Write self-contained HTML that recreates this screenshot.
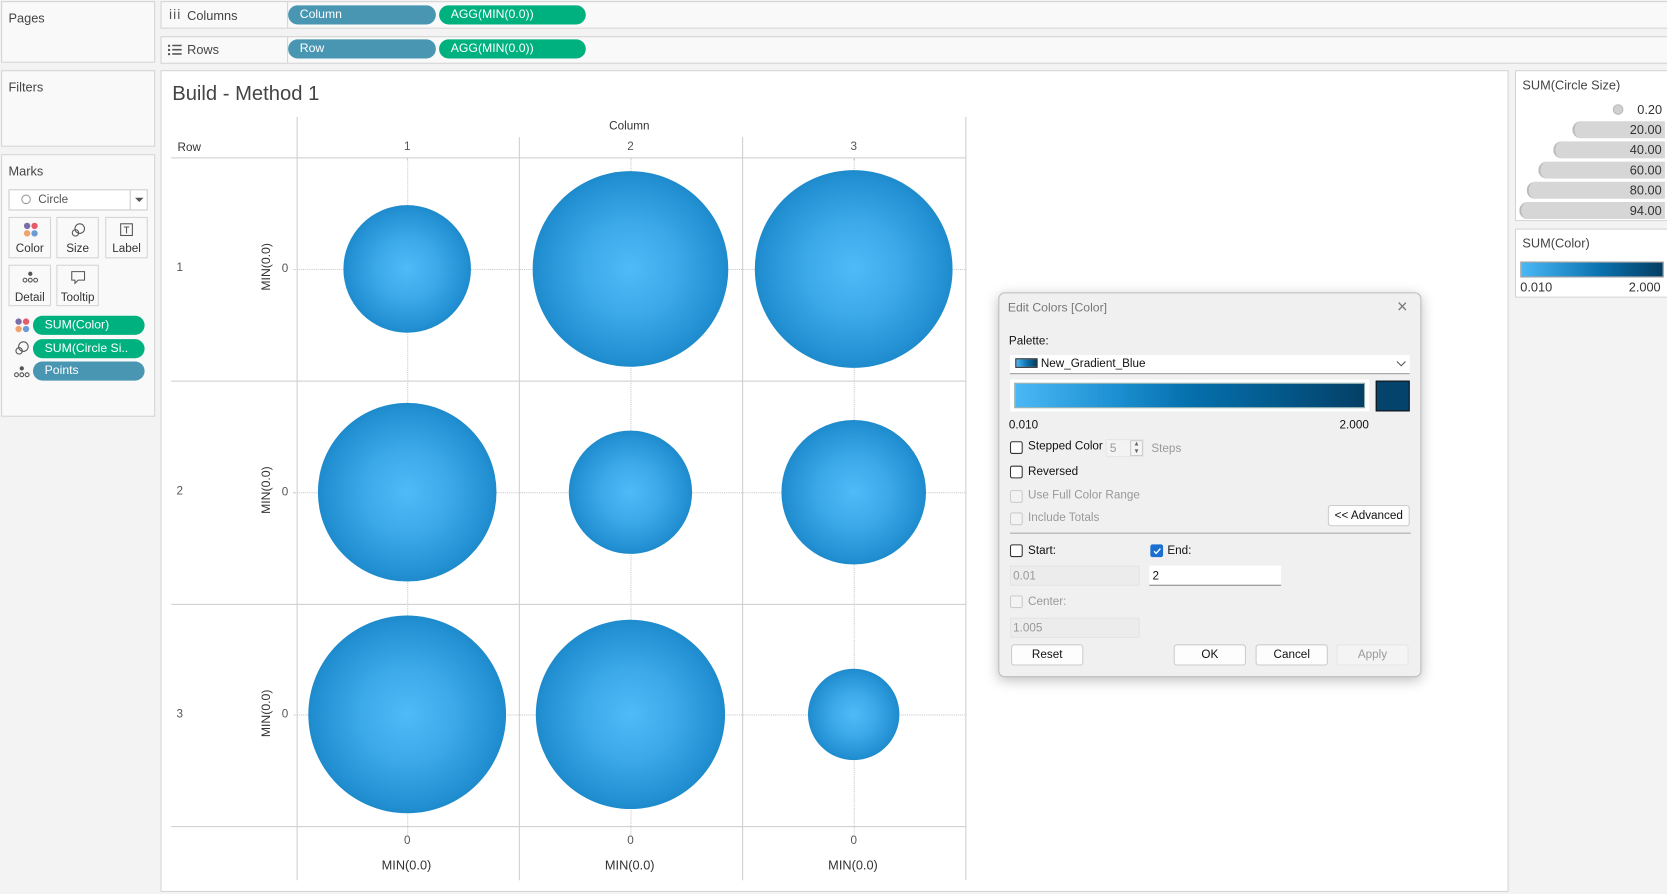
<!DOCTYPE html>
<html><head><meta charset="utf-8"><style>
*{box-sizing:border-box;margin:0;padding:0}
html,body{width:1667px;height:894px;overflow:hidden;background:#f3f3f3;font-family:"Liberation Sans",sans-serif}
#w{position:absolute;left:0;top:0;width:1568px;height:841px;transform:scale(1.06314);transform-origin:0 0;font-size:11px;color:#333}
.a{position:absolute}
.pan{position:absolute;background:#f9f9f9;border:1px solid #d4d4d4}
.pt{position:absolute;left:6px;top:8px;font-size:12px;color:#444}
.pill{position:absolute;height:18px;border-radius:9px;color:#fff;font-size:11.5px;padding-left:11px;display:flex;align-items:center;white-space:nowrap}
.bl{background:#4996b2}.gr{background:#00b180}
.btn{position:absolute;background:#f9f9f9;border:1px solid #d4d4d4;text-align:center;font-size:11px;color:#333}
.c{position:absolute;border-radius:50%;background:radial-gradient(circle at 50% 50%,#4fbbf8 0%,#3ba8e8 35%,#2290d2 65%,#1179bb 88%,#0a68a6 100%)}
.vl{position:absolute;width:1px;background:#cfcfcf}
.hl{position:absolute;height:1px;background:#cfcfcf}
.dv{position:absolute;width:0;border-left:1px dotted #c8c8c8}
.dh{position:absolute;height:0;border-top:1px dotted #c8c8c8}
.t{position:absolute;font-size:11px;color:#555;white-space:nowrap}
.rot{position:absolute;transform:rotate(-90deg);transform-origin:center;font-size:11.5px;color:#333;white-space:nowrap;width:60px;text-align:center}
.cb{position:absolute;width:12px;height:12px;border:1px solid #333;border-radius:2px;background:#fff}
.cbd{border-color:#ccc;background:#f3f3f3}
.dl{position:absolute;font-size:11px;color:#111;white-space:nowrap}
.dd{color:#999}
.db{position:absolute;background:#fdfdfd;border:1px solid #ccc;border-radius:3px;text-align:center;font-size:11px;line-height:18px;color:#111}
.lb{position:absolute;height:16px;background:#d6d6d6;border-left:2px solid #bbb;border-radius:8px 0 0 8px;text-align:right;padding-right:3px;font-size:12px;line-height:16px;color:#333}
</style></head><body><div id="w">
<div class="pan" style="left:1px;top:1px;width:145px;height:58px"><div class="pt">Pages</div></div>
<div class="pan" style="left:1px;top:66px;width:145px;height:72px"><div class="pt">Filters</div></div>
<div class="pan" style="left:1px;top:145px;width:145px;height:247px"><div class="pt">Marks</div>
 <div class="a" style="left:6px;top:32px;width:131px;height:20px;border:1px solid #ccc;background:#fff">
  <div class="a" style="left:11px;top:4px;width:9px;height:9px;border:1px solid #999;border-radius:50%"></div>
  <div class="a" style="left:27px;top:3px;font-size:11px;color:#555">Circle</div>
  <div class="a" style="left:113px;top:0;width:1px;height:18px;background:#ccc"></div>
  <div class="a" style="left:118px;top:7px;border:4px solid transparent;border-top:4px solid #555"></div>
 </div>
 <div class="btn" style="left:6px;top:58px;width:40px;height:39px"><svg class="a" style="left:13px;top:4px" width="14" height="14"><circle cx="3.5" cy="3.5" r="3" fill="#7b6ea8"/><circle cx="10.5" cy="3.5" r="3" fill="#e85a6a"/><circle cx="3.5" cy="10.5" r="3" fill="#f0a46c"/><circle cx="10.5" cy="10.5" r="3" fill="#6d9bd4"/></svg><div class="a" style="left:0;width:38px;top:23px">Color</div></div>
 <div class="btn" style="left:51px;top:58px;width:40px;height:39px"><svg class="a" style="left:12px;top:4px" width="15" height="15" fill="none" stroke="#555"><circle cx="9" cy="6" r="4.5"/><circle cx="5" cy="10" r="3"/></svg><div class="a" style="left:0;width:38px;top:23px">Size</div></div>
 <div class="btn" style="left:97px;top:58px;width:40px;height:39px"><svg class="a" style="left:12px;top:4px" width="14" height="14" fill="none" stroke="#555"><rect x="1.5" y="1.5" width="11" height="11"/><path d="M4.5 4.5h5M7 4.5v6"/></svg><div class="a" style="left:0;width:38px;top:23px">Label</div></div>
 <div class="btn" style="left:6px;top:103px;width:40px;height:39px"><svg class="a" style="left:12px;top:5px" width="15" height="12" fill="none" stroke="#555"><circle cx="7.5" cy="2.5" r="1.5" fill="#555"/><circle cx="2.5" cy="8.5" r="1.8"/><circle cx="7.5" cy="8.5" r="1.8"/><circle cx="12.5" cy="8.5" r="1.8"/></svg><div class="a" style="left:0;width:38px;top:24px">Detail</div></div>
 <div class="btn" style="left:51px;top:103px;width:40px;height:39px"><svg class="a" style="left:12px;top:4px" width="15" height="15" fill="none" stroke="#555"><path d="M1.5 1.5h12v8h-6l-3 3v-3h-3z"/></svg><div class="a" style="left:0;width:38px;top:24px">Tooltip</div></div>
 <svg class="a" style="left:12px;top:153px" width="14" height="14"><circle cx="3.5" cy="3.5" r="3" fill="#7b6ea8"/><circle cx="10.5" cy="3.5" r="3" fill="#e85a6a"/><circle cx="3.5" cy="10.5" r="3" fill="#f0a46c"/><circle cx="10.5" cy="10.5" r="3" fill="#6d9bd4"/></svg>
 <div class="pill gr" style="left:29px;top:151px;width:105px">SUM(Color)</div>
 <svg class="a" style="left:11px;top:174px" width="15" height="15" fill="none" stroke="#555"><circle cx="9" cy="6" r="4.5"/><circle cx="5" cy="10" r="3"/></svg>
 <div class="pill gr" style="left:29px;top:173px;width:105px">SUM(Circle Si..</div>
 <svg class="a" style="left:11px;top:198px" width="15" height="12" fill="none" stroke="#555"><circle cx="7.5" cy="2.5" r="1.5" fill="#555"/><circle cx="2.5" cy="8.5" r="1.8"/><circle cx="7.5" cy="8.5" r="1.8"/><circle cx="12.5" cy="8.5" r="1.8"/></svg>
 <div class="pill bl" style="left:29px;top:194px;width:105px">Points</div>
</div>
<div class="pan" style="left:151px;top:1px;width:1420px;height:26px">
 <div class="a" style="left:7px;top:4px;font-size:13px;letter-spacing:1px;color:#555">iii</div>
 <div class="a" style="left:24px;top:6px;font-size:12px;color:#444">Columns</div>
 <div class="a" style="left:118px;top:0;width:1px;height:24px;background:#d4d4d4"></div>
</div>
<div class="pill bl" style="left:271px;top:5px;width:139px">Column</div>
<div class="pill gr" style="left:413px;top:5px;width:138px">AGG(MIN(0.0))</div>
<div class="pan" style="left:151px;top:34px;width:1420px;height:26px">
 <svg class="a" style="left:6px;top:7px" width="13" height="10" fill="#555"><rect x="0" y="0" width="2" height="2"/><rect x="0" y="4" width="2" height="2"/><rect x="0" y="8" width="2" height="2"/><rect x="4" y="0" width="9" height="1.5"/><rect x="4" y="4" width="9" height="1.5"/><rect x="4" y="8" width="9" height="1.5"/></svg>
 <div class="a" style="left:24px;top:5px;font-size:12px;color:#444">Rows</div>
 <div class="a" style="left:118px;top:0;width:1px;height:24px;background:#d4d4d4"></div>
</div>
<div class="pill bl" style="left:271px;top:37px;width:139px">Row</div>
<div class="pill gr" style="left:413px;top:37px;width:138px">AGG(MIN(0.0))</div>
<div class="a" style="left:151px;top:66px;width:1268px;height:773px;background:#fff;border:1px solid #d4d4d4"></div>
<div class="a" style="left:162px;top:78px;font-size:19px;color:#444">Build - Method 1</div>
<div class="t" style="left:573px;top:113px;color:#333">Column</div>
<div class="t" style="left:167px;top:133px;color:#333">Row</div>
<div class="t" style="left:380px;top:132px">1</div><div class="t" style="left:590px;top:132px">2</div><div class="t" style="left:800px;top:132px">3</div>
<div class="vl" style="left:279px;top:110px;height:718px"></div>
<div class="vl" style="left:488px;top:129px;height:699px"></div>
<div class="vl" style="left:698px;top:129px;height:699px"></div>
<div class="vl" style="left:908px;top:110px;height:718px"></div>
<div class="hl" style="left:161px;top:148px;width:748px"></div>
<div class="hl" style="left:161px;top:358px;width:748px"></div>
<div class="hl" style="left:161px;top:568px;width:748px"></div>
<div class="hl" style="left:161px;top:777px;width:748px"></div>
<div class="dv" style="left:383px;top:149px;height:636px"></div>
<div class="dv" style="left:593px;top:149px;height:636px"></div>
<div class="dv" style="left:803px;top:149px;height:636px"></div>
<div class="dh" style="left:276px;top:253px;width:632px"></div>
<div class="dh" style="left:276px;top:463px;width:632px"></div>
<div class="dh" style="left:276px;top:672px;width:632px"></div>
<div class="t" style="left:166px;top:246px">1</div><div class="t" style="left:166px;top:456px">2</div><div class="t" style="left:166px;top:666px">3</div>
<div class="rot" style="left:221px;top:245px">MIN(0.0)</div><div class="t" style="left:265px;top:247px">0</div>
<div class="rot" style="left:221px;top:455px">MIN(0.0)</div><div class="t" style="left:265px;top:457px">0</div>
<div class="rot" style="left:221px;top:665px">MIN(0.0)</div><div class="t" style="left:265px;top:666px">0</div>
<div class="t" style="left:380px;top:785px">0</div><div class="t" style="left:590px;top:785px">0</div><div class="t" style="left:800px;top:785px">0</div>
<div class="t" style="left:359px;top:807px;font-size:12px;color:#333">MIN(0.0)</div>
<div class="t" style="left:569px;top:807px;font-size:12px;color:#333">MIN(0.0)</div>
<div class="t" style="left:779px;top:807px;font-size:12px;color:#333">MIN(0.0)</div>
<div class="c" style="left:323px;top:193px;width:120px;height:120px"></div>
<div class="c" style="left:501px;top:161px;width:184px;height:184px"></div>
<div class="c" style="left:710px;top:160px;width:186px;height:186px"></div>
<div class="c" style="left:299px;top:379px;width:168px;height:168px"></div>
<div class="c" style="left:535px;top:405px;width:116px;height:116px"></div>
<div class="c" style="left:735px;top:395px;width:136px;height:136px"></div>
<div class="c" style="left:290px;top:579px;width:186px;height:186px"></div>
<div class="c" style="left:504px;top:583px;width:178px;height:178px"></div>
<div class="c" style="left:760px;top:629px;width:86px;height:86px"></div>
<div class="pan" style="left:1425px;top:66px;width:145px;height:142px;background:#fff"><div class="pt" style="top:6px;font-size:12px">SUM(Circle Size)</div>
 <div class="a" style="left:91px;top:31px;width:10px;height:10px;border-radius:50%;background:#d0d0d0;border:1px solid #bbb"></div>
 <div class="t" style="left:114px;top:29px;font-size:12px;color:#333">0.20</div>
 <div class="lb" style="left:53px;top:47px;width:87px">20.00</div>
 <div class="lb" style="left:35px;top:66px;width:105px">40.00</div>
 <div class="lb" style="left:21px;top:85px;width:119px">60.00</div>
 <div class="lb" style="left:10px;top:104px;width:130px">80.00</div>
 <div class="lb" style="left:3px;top:123px;width:137px">94.00</div>
</div>
<div class="pan" style="left:1425px;top:215px;width:145px;height:65px;background:#fff"><div class="pt" style="top:6px;font-size:12px">SUM(Color)</div>
 <div class="a" style="left:4px;top:30px;width:135px;height:15px;border:1px solid #999;background:linear-gradient(90deg,#4ab8f5,#0b72b0 55%,#043d62)"></div>
 <div class="t" style="left:4px;top:47px;font-size:12px;color:#333">0.010</div>
 <div class="t" style="left:106px;top:47px;font-size:12px;color:#333">2.000</div>
</div>
<div class="a" style="left:939px;top:275px;width:398px;height:362px;background:#f0f0f0;border:1px solid #bdbdbd;border-radius:6px;box-shadow:0 3px 12px rgba(0,0,0,.25)">
 <div class="dl dd" style="left:8px;top:8px;color:#777;font-size:11.5px">Edit Colors [Color]</div>
 <div class="dl" style="left:374px;top:3px;font-size:17px;color:#777">×</div>
 <div class="dl" style="left:9px;top:39px">Palette:</div>
 <div class="a" style="left:10px;top:58px;width:376px;height:18px;background:#fff;border-bottom:1px solid #999">
  <div class="a" style="left:5px;top:3px;width:21px;height:9px;border:1px solid #222;background:linear-gradient(90deg,#4ab8f5,#0b72b0,#043d62)"></div>
  <div class="dl" style="left:29px;top:2px">New_Gradient_Blue</div>
  <svg class="a" style="left:363px;top:5px" width="10" height="6" fill="none" stroke="#555"><path d="M1 1l4 4 4-4"/></svg>
 </div>
 <div class="a" style="left:10px;top:81px;width:338px;height:30px;background:#fff"></div>
 <div class="a" style="left:14px;top:84px;width:330px;height:24px;border:1px solid #8aa;background:linear-gradient(90deg,#4ab8f5,#1a8ed0 30%,#0570ad 50%,#035a8c 75%,#043f66)"></div>
 <div class="a" style="left:354px;top:82px;width:32px;height:29px;background:#04446c;border:1px solid #111"></div>
 <div class="dl" style="left:9px;top:118px">0.010</div>
 <div class="dl" style="left:320px;top:118px">2.000</div>
 <div class="cb" style="left:10px;top:139px"></div><div class="dl" style="left:27px;top:138px">Stepped Color</div>
 <div class="a" style="left:100px;top:137px;width:36px;height:17px;background:#f3f3f3;border:1px solid #e6e6e6"></div>
 <div class="dl dd" style="left:104px;top:140px">5</div>
 <div class="a" style="left:123px;top:138px;width:12px;height:15px;border:1px solid #ccc;background:#f5f5f5;font-size:6px;line-height:7px;text-align:center;color:#666">▲<br>▼</div>
 <div class="dl dd" style="left:143px;top:140px">Steps</div>
 <div class="cb" style="left:10px;top:162px"></div><div class="dl" style="left:27px;top:162px">Reversed</div>
 <div class="cb cbd" style="left:10px;top:185px"></div><div class="dl dd" style="left:27px;top:184px">Use Full Color Range</div>
 <div class="cb cbd" style="left:10px;top:206px"></div><div class="dl dd" style="left:27px;top:205px">Include Totals</div>
 <div class="db" style="left:309px;top:199px;width:77px;height:20px">&lt;&lt; Advanced</div>
 <div class="a" style="left:10px;top:225px;width:377px;height:1px;background:#aaa"></div>
 <div class="cb" style="left:10px;top:236px"></div><div class="dl" style="left:27px;top:236px">Start:</div>
 <div class="cb" style="left:142px;top:236px;background:#1a6fd0;border-color:#1a6fd0"><svg class="a" style="left:1px;top:1px" width="9" height="9" fill="none" stroke="#fff" stroke-width="1.3"><path d="M1.5 4.5l2 2 4-4.5"/></svg></div><div class="dl" style="left:158px;top:236px">End:</div>
 <div class="a" style="left:10px;top:256px;width:122px;height:19px;background:#ececec;border:1px solid #e4e4e4"></div><div class="dl dd" style="left:13px;top:260px">0.01</div>
 <div class="a" style="left:141px;top:256px;width:124px;height:19px;background:#fff;border-bottom:1px solid #888"></div><div class="dl" style="left:144px;top:260px">2</div>
 <div class="cb cbd" style="left:10px;top:284px"></div><div class="dl dd" style="left:27px;top:284px">Center:</div>
 <div class="a" style="left:10px;top:305px;width:122px;height:19px;background:#ececec;border:1px solid #e4e4e4"></div><div class="dl dd" style="left:13px;top:309px">1.005</div>
 <div class="db" style="left:11px;top:330px;width:68px;height:20px">Reset</div>
 <div class="db" style="left:164px;top:330px;width:68px;height:20px">OK</div>
 <div class="db" style="left:241px;top:330px;width:68px;height:20px">Cancel</div>
 <div class="db" style="left:317px;top:330px;width:68px;height:20px;color:#999;background:#f4f4f4;border-color:#e6e6e6">Apply</div>
</div>
</div></body></html>
